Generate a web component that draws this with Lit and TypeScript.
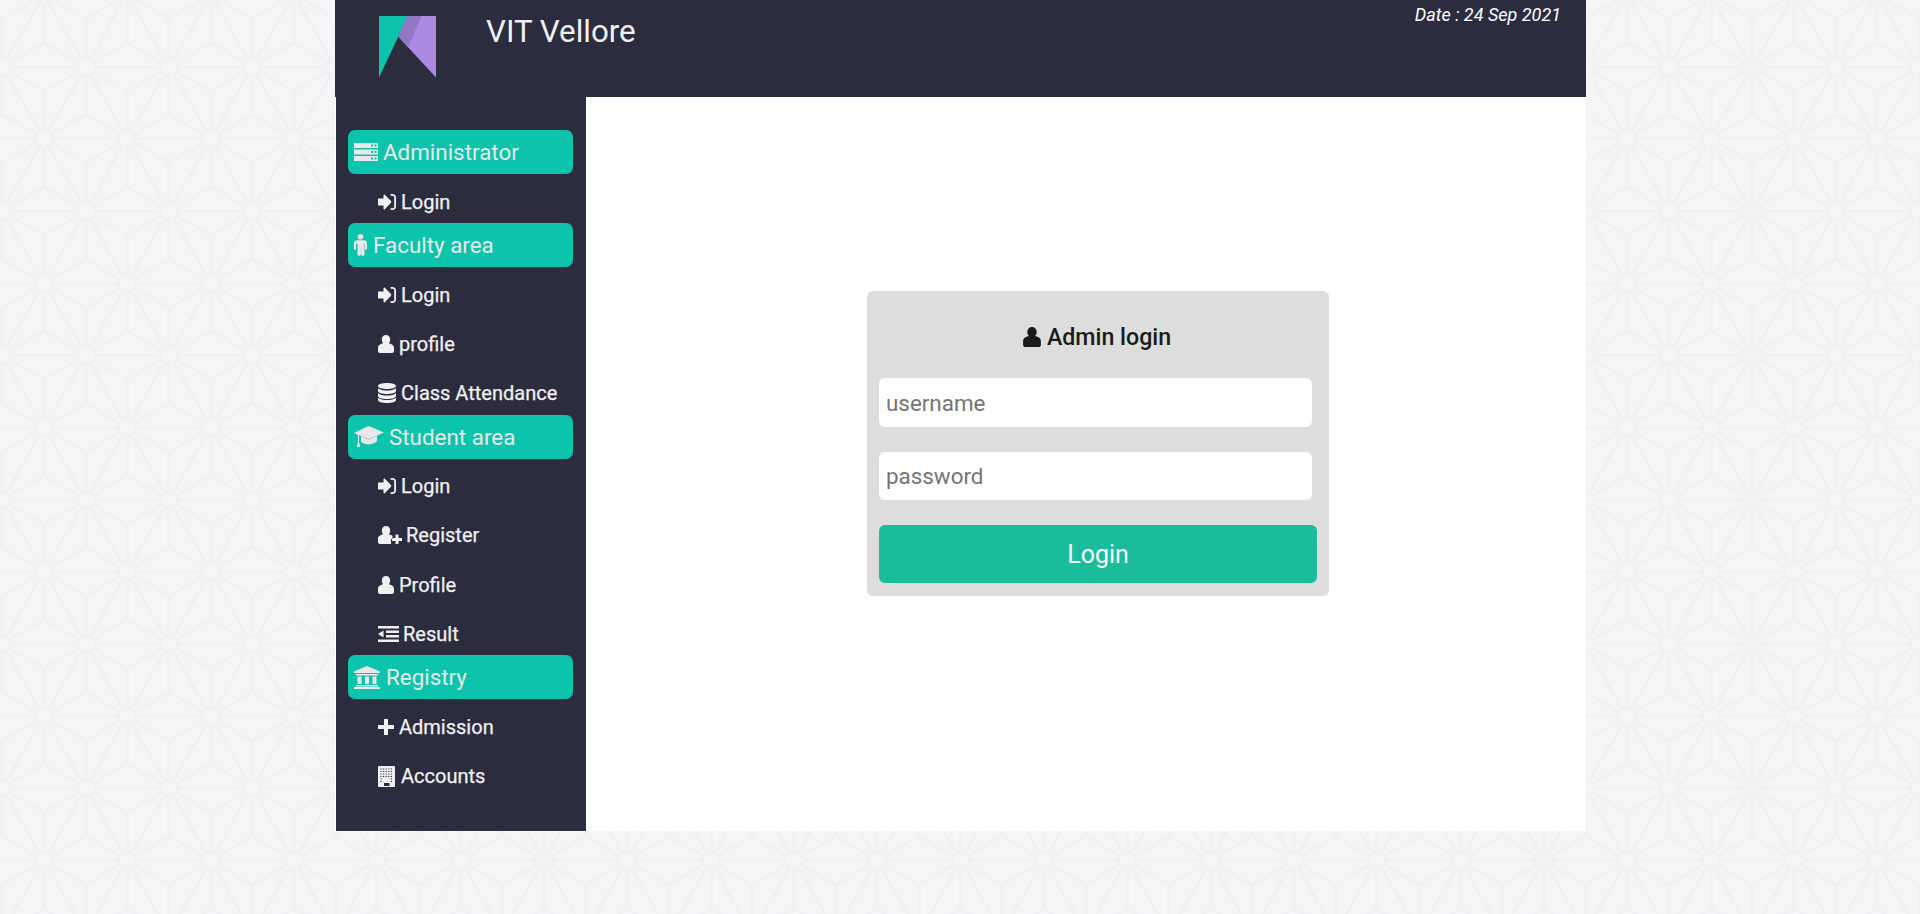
import { LitElement, html, css, svg, unsafeCSS } from "lit";
import { customElement } from "lit/decorators.js";

const W = 83.33, H = 72.17;
function tile(): string {
  const pts: string[] = [];
  const seg = (a: number, b: number, c: number, d: number) => pts.push(`M${a.toFixed(2)} ${b.toFixed(2)}L${c.toFixed(2)} ${d.toFixed(2)}`);
  let circles = "";
  for (let r = -1; r <= 3; r++) {
    for (let c = -1; c <= 2; c++) {
      const x = c * W + (r % 2 !== 0 ? W / 2 : 0), y = r * H;
      seg(x, y, x + W, y);
      seg(x, y, x + W / 2, y + H);
      seg(x, y, x - W / 2, y + H);
      seg(x, y, x, y + (H * 2) / 3);
      seg(x, y, x, y - (H * 2) / 3);
      seg(x - W / 2, y + H / 3, x, y);
      seg(x + W / 2, y + H / 3, x, y);
      seg(x - W / 2, y - H / 3, x, y);
      seg(x + W / 2, y - H / 3, x, y);
      circles += `<circle cx='${x.toFixed(2)}' cy='${y.toFixed(2)}' r='8.8' fill='%23f4f5f7' stroke='%23f0f1f3' stroke-width='2.5'/>`;
    }
  }
  return `<svg xmlns='http://www.w3.org/2000/svg' width='${W}' height='${H * 2}'><path d='${pts.join("")}' stroke='%23f0f1f3' stroke-width='2.8' fill='none'/>${circles}</svg>`;
}

let dots = "";
for (let y = 2.4; y < 15; y += 2.5) for (let x = 2.4; x < 14; x += 2.6) if (!(y > 12 && x > 4 && x < 12)) dots += `M${x} ${y}h1.2v1.2h-1.2z`;

const userBody = "M8 0c2.600 0 4.200 2 4.200 4.600 0 1.500-.5 2.800-1.300 3.600 2.200.8 5.100 1.500 5.100 4.400v3.500c0 1-.8 1.900-1.800 1.900H1.800C.8 18 0 17.100 0 16.100v-3.500c0-2.900 2.900-3.600 5.100-4.400C4.300 7.400 3.800 6.100 3.800 4.600 3.800 2 5.400 0 8 0z";

const icons: Record<string, { w: number; h: number; d: string }> = {
  tasks: { w: 24, h: 18, d: "M0 0h24v5H0zM17 1.500v2h2v-2zM20.500 1.500v2h2v-2zM0 6.500h24v5H0zM17 8v2h2V8zM20.500 8v2h2V8zM0 13h24v5H0zM17 14.500v2h2v-2zM20.500 14.500v2h2v-2z" },
  male: { w: 13, h: 22, d: "M6.500 0a2.800 2.800 0 1 1 0 5.600a2.800 2.800 0 0 1 0-5.600zM3 6.300h7c1.700 0 3 1.200 3 2.800v5.700c0 1.300-2 1.300-2 0V9.800h-.5V20.500c0 1.700-3.400 1.700-3.400 0V15h-.2v5.500c0 1.700-3.400 1.700-3.400 0V9.800H2v5c0 1.300-2 1.300-2 0V9.100C0 7.500 1.300 6.300 3 6.300z" },
  login: { w: 18, h: 16, d: "M0 4.500h5.500V1.200c0-.7.800-1 1.300-.5l6.200 6.400c.4.500.4 1.200 0 1.700l-6.200 6.400c-.5.500-1.300.2-1.300-.5v-3.300H0zM12.500 0h2C16.500 0 18 1.500 18 3.500v9c0 2-1.500 3.500-3.500 3.500h-2v-1.800h2c1 0 1.700-.8 1.700-1.700v-9c0-1-.7-1.700-1.700-1.700h-2z" },
  user: { w: 16, h: 18, d: userBody },
  db: { w: 18, h: 20, d: "M9 0c5 0 9 1.300 9 3s-4 3-9 3-9-1.300-9-3 4-3 9-3zM0 5.200C1.800 6.800 5.200 7.500 9 7.500s7.200-.7 9-2.300V8c0 1.700-4 3-9 3S0 9.700 0 8zM0 10.200c1.800 1.600 5.200 2.300 9 2.300s7.200-.7 9-2.300V13c0 1.700-4 3-9 3s-9-1.300-9-3zM0 14.700c1.800 1.600 5.200 2.300 9 2.300s7.200-.7 9-2.300V17c0 1.700-4 3-9 3s-9-1.300-9-3z" },
  cap: { w: 30, h: 21, d: "M14.500 0L30 6.500l-4.500 2-11 4.500L5 9.200V17c.6.5.8 1 .8 1.600L6 21H2.800l.4-2.400c0-.6.300-1.100.700-1.600V8.700L0 7zM7 10.200l7.500 3.200 8.500-3.600v5.300c-2 2.200-5.200 3.300-8.500 3.300-2.900 0-5.600-.8-7.500-2.400z" },
  userplus: { w: 24, h: 18, d: "M8 0c2.600 0 4.200 2 4.200 4.600 0 1.500-.5 2.800-1.300 3.600 1.300.5 2.600.9 3.600 1.600V13h-1.500v5H1.800C.8 18 0 17.100 0 16.100v-3.500c0-2.900 2.900-3.600 5.100-4.400C4.300 7.400 3.800 6.100 3.800 4.600 3.800 2 5.400 0 8 0zM17.500 8.500h3v3.500H24v3h-3.500v3.500h-3V15H14v-3h3.500z" },
  indent: { w: 21, h: 16, d: "M0 0h21v2.500H0zM8 4.500h13V7H8zM8 9h13v2.500H8zM0 13.500h21V16H0zM0 8l5.500-3.500v7z" },
  bank: { w: 26, h: 23, d: "M13 0l13 5.500V7H0V5.500zM2 8h22v1.500H2zM3.500 10.500h4v7.500h-4zM11 10.500h4v7.500h-4zM18.500 10.500h4v7.500h-4zM2 19h22v1.500H2zM0 21h26v2H0z" },
  plus: { w: 16, h: 16, d: "M6 0h4v6h6v4h-6v6H6v-6H0V6h6z" },
  building: { w: 17, h: 21, d: "M1 0h15c.5 0 1 .5 1 1v19c0 .5-.5 1-1 1H1c-.5 0-1-.5-1-1V1c0-.5.5-1 1-1z" + dots + "M6 17v3h5.500v-3z" },
};

function icon(name: string) {
  const i = icons[name];
  return html`<svg class="ico" width=${i.w} height=${i.h} viewBox="0 0 ${i.w} ${i.h}">${svg`<path fill="currentColor" fill-rule="evenodd" d=${i.d}></path>`}</svg>`;
}

const groups = [
  { icon: "tasks", label: "Administrator", gap: 5, items: [["login", "Login", 5]] },
  { icon: "male", label: "Faculty area", gap: 6, items: [["login", "Login", 5], ["user", "profile", 5], ["db", "Class Attendance", 5]] },
  { icon: "cap", label: "Student area", gap: 5, items: [["login", "Login", 5], ["userplus", "Register", 4], ["user", "Profile", 5], ["indent", "Result", 4]] },
  { icon: "bank", label: "Registry", gap: 6, items: [["plus", "Admission", 5], ["building", "Accounts", 6]] },
] as const;

@customElement("app-root")
export class AppRoot extends LitElement {
  static styles = css`
    :host {
      display: block;
      height: 914px;
      background-color: #f4f5f7;
      background-image: url("data:image/svg+xml,${unsafeCSS(tile())}");
      background-position: 2.33px 66.67px;
      background-size: ${unsafeCSS(String(W))}px ${unsafeCSS(String(H * 2))}px;
      font-family: Roboto, "Liberation Sans", sans-serif;
      overflow: hidden;
    }
    .wrap { width: 1251px; margin-left: 335px; background: #fff; height: 831px; }
    .head { height: 97px; background: #2c2c3f; display: flex; position: relative; }
    .logo { margin: 16px 0 0 44px; flex: none; }
    .title { margin: 12px 0 0 50px; font-size: 31.3px; line-height: 40px; color: #f1f1f1; }
    .date { margin: 4px 25px 0 auto; font-size: 18px; font-style: italic; line-height: 22px; color: #fff; }
    .body { display: flex; height: 734px; }
    .side { width: 250px; margin-left: 1px; background: #2c2c3f; padding: 33px 0 0 12px; box-sizing: border-box; flex: none; }
    .group { margin-bottom: -2.8px; }
    .btn {
      width: 225px; height: 44px; box-sizing: border-box; background: #0cc3ab; border-radius: 7px;
      display: flex; align-items: center; padding-left: 6px; color: #e8e8e8; font-size: 22.4px;
    }
    ul { list-style: none; margin: 3px 0 0; padding: 0 0 0 30px; }
    li { height: 49.1px; display: flex; align-items: center; color: #f0f0f0; font-size: 20px; font-weight: 400; -webkit-text-stroke: 0.25px #f0f0f0; position: relative; }
    .ico { flex: none; }
    .main { flex: 1; padding: 194px 0 0 281px; }
    .card { width: 462px; height: 305px; box-sizing: border-box; background: #ddd; border-radius: 6px; padding: 29px 12px 0; }
    h3 { margin: 0; font-size: 23.2px; line-height: 34px; font-weight: 500; color: #1a1a1a; display: flex; justify-content: center; align-items: center; gap: 6px; padding-right: 2px; }
    h3 .ico { width: 18px; height: 20px; }
    input {
      display: block; width: 433px; height: 49px; box-sizing: border-box; border: 0; border-radius: 6px; background: #fff;
      padding: 0 7px; font: 22.4px Roboto, sans-serif; margin-top: 24px; outline: 0;
    }
    input::placeholder { color: #757575; opacity: 1; }
    .pw { height: 48px; margin-top: 25px; }
    button {
      display: block; width: 438px; height: 58px; border: 0; border-radius: 6px; background: #1abc9c; color: #fff;
      font: 400 25px Roboto, sans-serif; padding: 1px 0 0; margin-top: 25px;
    }
  `;

  render() {
    return html`
      <div class="wrap">
        <header class="head">
          <svg class="logo" width="57" height="62" viewBox="0 0 57 62">
            <path fill="#0cc3ab" d="M0 0h28.300L19.300 20.700 0 61.500z"></path>
            <path fill="#ab8ae1" d="M28.300 0H57v61.500L19.300 20.700z"></path>
            <path fill="#9477c4" d="M28.300 0h14.400L29.300 30 19.300 20.700z"></path>
          </svg>
          <div class="title">VIT Vellore</div>
          <div class="date">Date : 24 Sep 2021</div>
        </header>
        <div class="body">
          <nav class="side">
            ${groups.map(
              (g) => html`
                <div class="group">
                  <div class="btn" style="gap:${g.gap}px">${icon(g.icon)}<span>${g.label}</span></div>
                  <ul>
                    ${g.items.map((it) => html`<li style="gap:${it[2]}px">${icon(it[0])}<span>${it[1]}</span></li>`)}
                  </ul>
                </div>
              `
            )}
          </nav>
          <main class="main">
            <form class="card">
              <h3>${icon("user")}<span>Admin login</span></h3>
              <input placeholder="username" />
              <input class="pw" placeholder="password" />
              <button type="button">Login</button>
            </form>
          </main>
        </div>
      </div>
    `;
  }
}
